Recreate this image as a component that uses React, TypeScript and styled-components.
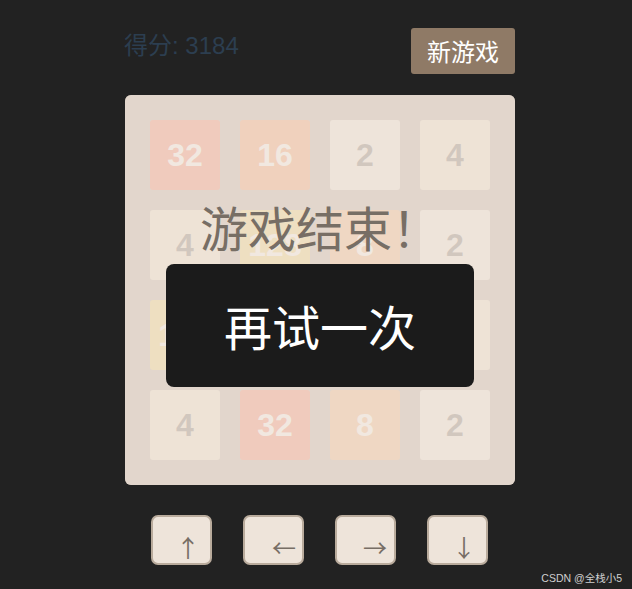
import React from "react";
import styled, { createGlobalStyle } from "styled-components";

const GlobalStyle = createGlobalStyle`
  html, body {
    margin: 0;
    padding: 0;
    background: #222222;
  }
  body {
    font-family: "Liberation Sans", "Noto Sans CJK SC", sans-serif;
  }
`;

const Page = styled.div`
  position: relative;
  min-height: 589px;
  box-sizing: border-box;
  padding: 28px 0 0 8px;
  display: flex;
  flex-direction: column;
  align-items: center;
`;

const Header = styled.div`
  width: 390px;
  display: flex;
  justify-content: space-between;
  align-items: flex-start;
`;

const Score = styled.div`
  margin: 3px 0 0 -1px;
  font-size: 24px;
  line-height: 30px;
  color: #2c3e50;
`;

const NewGameButton = styled.button`
  border: none;
  border-radius: 3px;
  background: #8f7a66;
  color: #ffffff;
  font-family: "Noto Sans CJK SC", sans-serif;
  font-size: 24px;
  line-height: 30px;
  padding: 8px 16px;
  cursor: pointer;
`;

const Board = styled.div`
  position: relative;
  margin-top: 21px;
  width: 390px;
  height: 390px;
  box-sizing: border-box;
  padding: 25px;
  border-radius: 6px;
  background: #bbada0;
  display: grid;
  grid-template-columns: repeat(4, 70px);
  grid-template-rows: repeat(4, 70px);
  gap: 20px;
`;

const tileColors: Record<number, string> = {
  2: "#eee4da",
  4: "#ede0c8",
  8: "#f2b179",
  16: "#f59563",
  32: "#f67c5f",
  64: "#f65e3b",
  128: "#edcf72",
  256: "#edcc61",
};

const Tile = styled.div<{ $value: number }>`
  border-radius: 3px;
  background: ${(p) => tileColors[p.$value] || "#3c3a32"};
  color: ${(p) => (p.$value <= 4 ? "#776e65" : "#f9f6f2")};
  display: flex;
  align-items: center;
  justify-content: center;
  font-size: 32px;
  font-weight: bold;
`;

const Overlay = styled.div`
  position: absolute;
  inset: 0;
  border-radius: 6px;
  background: rgba(238, 228, 218, 0.76);
  display: flex;
  flex-direction: column;
  align-items: center;
  justify-content: center;
`;

const GameOverText = styled.p`
  margin: 0 0 5px 0;
  font-family: "Noto Sans CJK SC", sans-serif;
  font-size: 48px;
  line-height: 66px;
  color: #776e65;
`;

const RetryButton = styled.button`
  border: none;
  border-radius: 8px;
  background: #1b1b1b;
  color: #ffffff;
  font-family: "Noto Sans CJK SC", sans-serif;
  font-size: 48px;
  line-height: 55px;
  padding: 34px 58px;
  cursor: pointer;
`;

const Controls = styled.div`
  margin: 30px 0 0 -2px;
  display: flex;
  gap: 31px;
`;

const ArrowButton = styled.button<{ $shift: number }>`
  width: 61px;
  height: 50px;
  box-sizing: border-box;
  border: 2px solid #b9ab9c;
  border-radius: 7px;
  background: #eee4da;
  color: #776e65;
  font-family: "Noto Sans CJK SC", sans-serif;
  font-size: 24px;
  line-height: 24px;
  padding: 14px 0 0 ${(p) => p.$shift}px;
  display: flex;
  align-items: center;
  justify-content: center;
  cursor: pointer;
`;

const Watermark = styled.div`
  position: absolute;
  right: 10px;
  bottom: 4px;
  font-size: 10.5px;
  color: #d0d0d0;
  font-family: "Liberation Sans", "Noto Sans CJK SC", sans-serif;
`;

const grid = [
  [32, 16, 2, 4],
  [4, 128, 8, 2],
  [128, 64, 16, 4],
  [4, 32, 8, 2],
];

const arrows = [
  { label: "↑", shift: 14 },
  { label: "←", shift: 22 },
  { label: "→", shift: 20 },
  { label: "↓", shift: 14 },
];

export default function App() {
  return (
    <>
      <GlobalStyle />
      <Page>
        <Header>
          <Score>得分: 3184</Score>
          <NewGameButton>新游戏</NewGameButton>
        </Header>
        <Board>
          {grid.flat().map((v, i) => (
            <Tile key={i} $value={v}>
              {v}
            </Tile>
          ))}
          <Overlay>
            <GameOverText>游戏结束！</GameOverText>
            <RetryButton>再试一次</RetryButton>
          </Overlay>
        </Board>
        <Controls>
          {arrows.map((a) => (
            <ArrowButton key={a.label} $shift={a.shift}>
              {a.label}
            </ArrowButton>
          ))}
        </Controls>
        <Watermark>CSDN @全栈小5</Watermark>
      </Page>
    </>
  );
}
